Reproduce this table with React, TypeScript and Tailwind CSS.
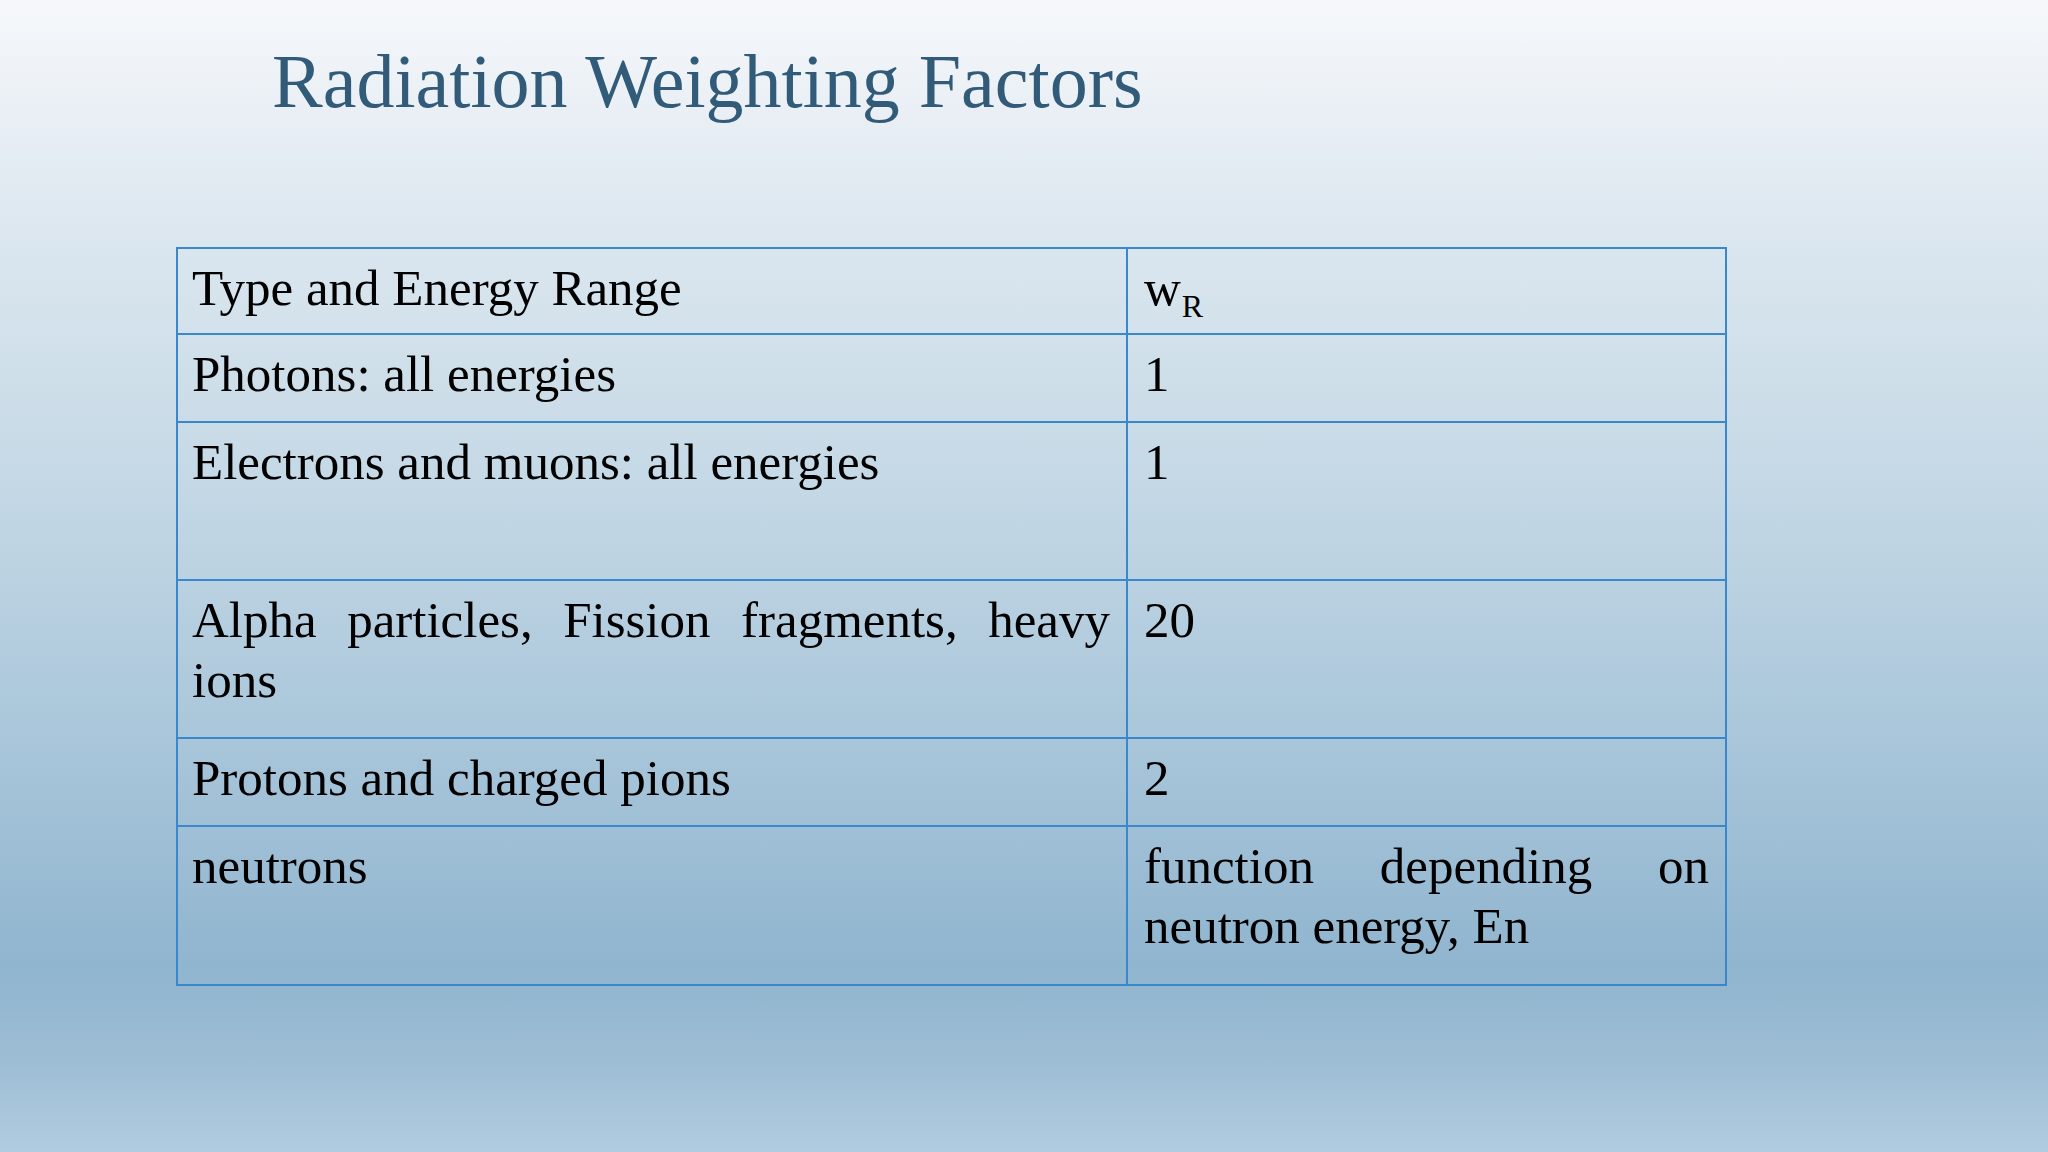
import type { ReactNode } from 'react';

type Row = {
  label: string;
  value: ReactNode;
  height: string;
  justify?: boolean;
};

const rows: Row[] = [
  {
    label: 'Type and Energy Range',
    value: (
      <>
        w<span className="relative top-[12px] ml-[1px] text-[32px] leading-none">R</span>
      </>
    ),
    height: 'h-[86px]',
  },
  { label: 'Photons: all energies', value: '1', height: 'h-[88px]' },
  { label: 'Electrons and muons: all energies', value: '1', height: 'h-[158px]' },
  { label: 'Alpha particles, Fission fragments, heavy ions', value: '20', height: 'h-[158px]', justify: true },
  { label: 'Protons and charged pions', value: '2', height: 'h-[88px]' },
  { label: 'neutrons', value: 'function depending on neutron energy, En', height: 'h-[159px]', justify: true },
];

export default function App() {
  return (
    <div className="h-[1152px] w-[2048px] overflow-hidden bg-[linear-gradient(180deg,#f6f8fb_0%,#e9eff5_10%,#dde8f0_19%,#c1d6e4_45%,#a9c6da_64%,#90b5cf_84%,#9dbdd4_92%,#b1cce0_100%)] font-['Liberation_Serif','Times_New_Roman',serif]">
      <h1 className="pl-[272px] pt-[43px] text-[76px] font-normal leading-[76px] text-[#315b79]">
        Radiation Weighting Factors
      </h1>

      <div className="ml-[176px] mt-[128px] grid w-[1551px] grid-cols-[950px_599px] border-l-2 border-t-2 border-[#3a87cc] text-[51px] leading-[60px] text-black">
        {rows.map((row) => (
          <div key={row.label} className="contents">
            <div className={`${row.height} border-b-2 border-r-2 border-[#3a87cc] pl-[14px] pr-[16px] pt-[9px] ${row.justify ? 'text-justify' : ''}`}>
              {row.label}
            </div>
            <div className={`${row.height} border-b-2 border-r-2 border-[#3a87cc] pl-[16px] pr-[16px] pt-[9px] ${row.justify ? 'text-justify' : ''}`}>
              {row.value}
            </div>
          </div>
        ))}
      </div>
    </div>
  );
}
